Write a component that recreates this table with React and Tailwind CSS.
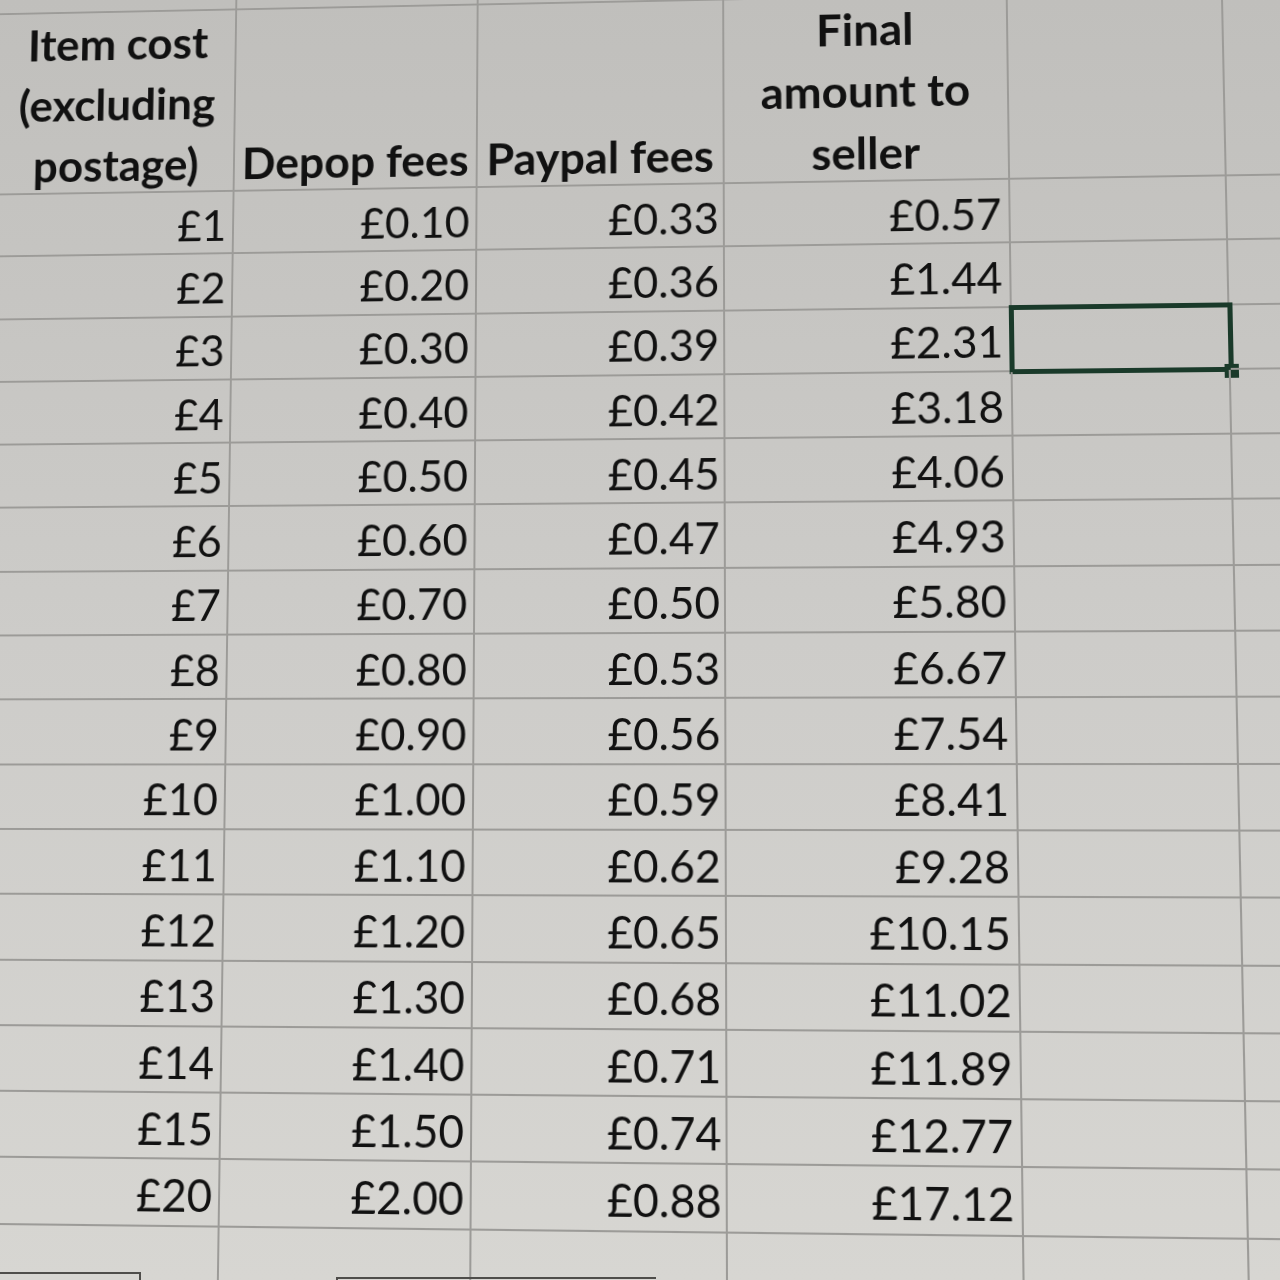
import React from "react";

const rows = [
  ["£1", "£0.10", "£0.33", "£0.57"],
  ["£2", "£0.20", "£0.36", "£1.44"],
  ["£3", "£0.30", "£0.39", "£2.31"],
  ["£4", "£0.40", "£0.42", "£3.18"],
  ["£5", "£0.50", "£0.45", "£4.06"],
  ["£6", "£0.60", "£0.47", "£4.93"],
  ["£7", "£0.70", "£0.50", "£5.80"],
  ["£8", "£0.80", "£0.53", "£6.67"],
  ["£9", "£0.90", "£0.56", "£7.54"],
  ["£10", "£1.00", "£0.59", "£8.41"],
  ["£11", "£1.10", "£0.62", "£9.28"],
  ["£12", "£1.20", "£0.65", "£10.15"],
  ["£13", "£1.30", "£0.68", "£11.02"],
  ["£14", "£1.40", "£0.71", "£11.89"],
  ["£15", "£1.50", "£0.74", "£12.77"],
  ["£20", "£2.00", "£0.88", "£17.12"],
];

const colW = [
  "w-[283px]",
  "w-[251px]",
  "w-[252px]",
  "w-[287px]",
  "w-[215px]",
  "w-[112px]",
];
const colPad = [
  "pr-[6px]",
  "pr-[6px]",
  "pr-[4px]",
  "pr-[7px]",
  "pr-[8px]",
  "pr-[8px]",
];

const line = "border-r-2 border-b-2 border-[#9c9b98]";

function EmptyRow({ h }) {
  return (
    <div className={`flex shrink-0 ${h}`}>
      {colW.map((w, i) => (
        <div key={i} className={`${w} shrink-0 ${line}`} />
      ))}
    </div>
  );
}

function HeaderRow() {
  const heads = [
    ["Item cost", "(excluding", "postage)"],
    ["Depop fees"],
    ["Paypal fees"],
    ["Final", "amount to", "seller"],
    [],
    [],
  ];
  return (
    <div className="flex shrink-0 h-[191px]">
      {heads.map((lines, i) => (
        <div
          key={i}
          className={`${colW[i]} shrink-0 ${line} flex flex-col justify-end items-center ${
            i === 0 ? "pl-[36px]" : ""
          }`}
        >
          {lines.map((t, j) => (
            <div
              key={j}
              className="leading-[64px] font-bold text-[46px] whitespace-nowrap translate-y-[4px]"
            >
              {t}
            </div>
          ))}
        </div>
      ))}
    </div>
  );
}

function DataRow({ cells, idx }) {
  const all = [...cells, "", ""];
  return (
    <div className="flex shrink-0 h-[65.3px]">
      {all.map((t, i) => (
        <div
          key={i}
          className={`${colW[i]} ${colPad[i]} shrink-0 ${line} relative flex items-center justify-end pt-[4px] text-[44px] leading-none`}
        >
          {t}
          {idx === 2 && i === 4 && (
            <>
              <div className="absolute -left-[3px] -top-[3px] -right-[5px] -bottom-[4px] border-[5px] border-[#1a3a2a]" />
              <div className="absolute -right-[10px] -bottom-[10px] w-[14px] h-[14px] bg-[#1a3a2a]" />
            </>
          )}
        </div>
      ))}
    </div>
  );
}

export default function App() {
  return (
    <div className="relative w-[1280px] h-[1280px] overflow-hidden bg-linear-to-b from-[#c0bfbc] via-[#cdccc9] to-[#d7d6d2] text-[#111111] font-['Lato','Open_Sans',sans-serif]">
      <div className="w-[1400px] h-[1400px] -ml-[60px] -mt-[60px] flex flex-col [transform:perspective(2000px)_rotateX(4deg)_rotateY(-3deg)] blur-[0.4px]">
        <EmptyRow h="h-[46px]" />
        <HeaderRow />
        {rows.map((r, i) => (
          <DataRow key={i} cells={r} idx={i} />
        ))}
        <EmptyRow h="h-[65.3px]" />
        <EmptyRow h="h-[65.3px]" />
      </div>
      <div className="absolute left-0 top-[1272px] w-[141px] h-[20px] border-t-2 border-r-2 border-[#4e4d4a]" />
      <div className="absolute left-[336px] top-[1277px] w-[320px] h-[20px] border-t-2 border-l-2 border-[#4e4d4a]" />
    </div>
  );
}
